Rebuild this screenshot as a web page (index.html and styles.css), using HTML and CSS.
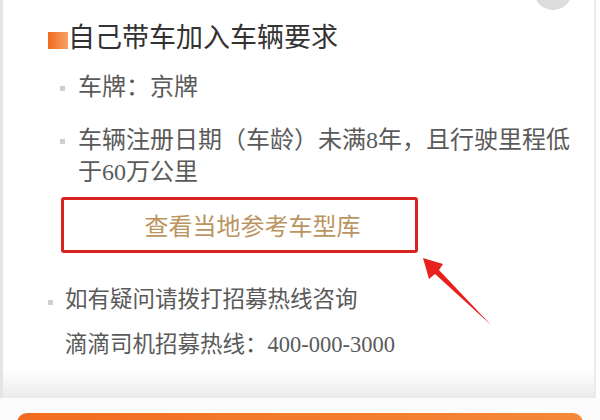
FILE: index.html
```html
<!DOCTYPE html>
<html lang="zh-CN">
<head>
  <meta charset="UTF-8"/>
  <meta name="viewport" content="width=device-width,initial-scale=1"/>
  <title>车辆要求</title>
  <link rel="stylesheet" href="styles.css">
</head>
<body>
  <div class="screen">
    <span class="avatar"></span>

    <section class="card">
      <h2 class="title"><i class="mark"></i>自己带车加入车辆要求</h2>
      <ul class="reqs">
        <li>车牌：京牌</li>
        <li>车辆注册日期（车龄）未满8年，且行驶里程低于60万公里</li>
      </ul>
      <a class="lib-btn" href="#">查看当地参考车型库</a>
      <ul class="help">
        <li>如有疑问请拨打招募热线咨询</li>
        <li class="plain">滴滴司机招募热线：400-000-3000</li>
      </ul>
    </section>

    <div class="footer">
      <button class="cta" type="button"></button>
    </div>

    <!-- 标注箭头 -->
    <svg class="arrow" width="600" height="420" viewBox="0 0 600 420">
      <polygon points="423,258 443,264 439,270 491,325 435,274 429,279" fill="#e8211e"/>
    </svg>
  </div>
</body>
</html>
```

FILE: styles.css
```css
:root {
  --border: #e4e4e4;
  --title: #333;
  --text: #5a5a5a;
  --dot: #cfcfcf;
  --red: #d9231f;
  --gold: #bb9561;
  --orange: #f26c1f;
}
* { box-sizing: border-box; margin: 0; padding: 0 }
body {
  background: #fff;
  font-family: "Liberation Serif", "Noto Sans CJK SC", serif;
  color: var(--text);
}
.screen {
  position: relative;
  width: 600px;
  height: 420px;
  overflow: hidden;
}
.avatar {
  position: absolute;
  left: 534px;
  top: -28px;
  width: 38px;
  height: 38px;
  border-radius: 50%;
  background: #dcdcdc;
}
.card {
  width: 596px;
  height: 398px;
  border-left: 3px solid var(--border);
  border-right: 2px solid #ebebeb;
  padding: 17px 20px 0 45px;
  background: linear-gradient(#fff 0, #fff 370px, #ebebeb 398px);
}
.title {
  display: flex;
  font-family: "Noto Sans CJK SC", sans-serif;
  font-weight: 400;
  font-size: 27px;
  line-height: 37px;
  color: var(--title);
}
.mark {
  flex: none;
  align-self: flex-end;
  width: 20px;
  height: 17px;
  margin: 0 0 5px 0;
  background: linear-gradient(90deg, #ef6a1c, #f7a265);
}
ul { list-style: none }
.reqs, .help { font-size: 24px; line-height: 32px }
.reqs { margin-top: 17px }
.reqs li { display: flex; margin-bottom: 21px }
.reqs li::before {
  content: "";
  flex: none;
  width: 5px;
  height: 5px;
  margin: 15px 13px 0 12px;
  background: var(--dot);
}
.reqs li:last-child { margin-bottom: 0 }
.lib-btn {
  display: block;
  width: 357px;
  height: 56px;
  margin: 9px 0 0 13px;
  padding-left: 26px;
  border: 3px solid var(--red);
  border-radius: 3px;
  font-family: "Noto Sans CJK SC", sans-serif;
  font-size: 24px;
  line-height: 50px;
  text-align: center;
  color: var(--gold);
  text-decoration: none;
}
.help { margin-top: 31px; font-size: 22.5px }
.help li { display: flex }
.help li::before {
  content: "";
  flex: none;
  width: 5px;
  height: 5px;
  margin: 16px 12px 0 0;
  background: var(--dot);
}
.help li.plain { margin-top: 13px; padding-left: 17px }
.help li.plain::before { display: none }
.footer {
  height: 22px;
  padding: 15px 17px 0;
  background: #fcfcfc;
}
.cta {
  display: block;
  width: 566px;
  height: 40px;
  border: none;
  border-radius: 10px;
  background: linear-gradient(90deg, var(--orange), #f5883a);
}
.arrow {
  position: absolute;
  left: 0;
  top: 0;
  pointer-events: none;
}
```
